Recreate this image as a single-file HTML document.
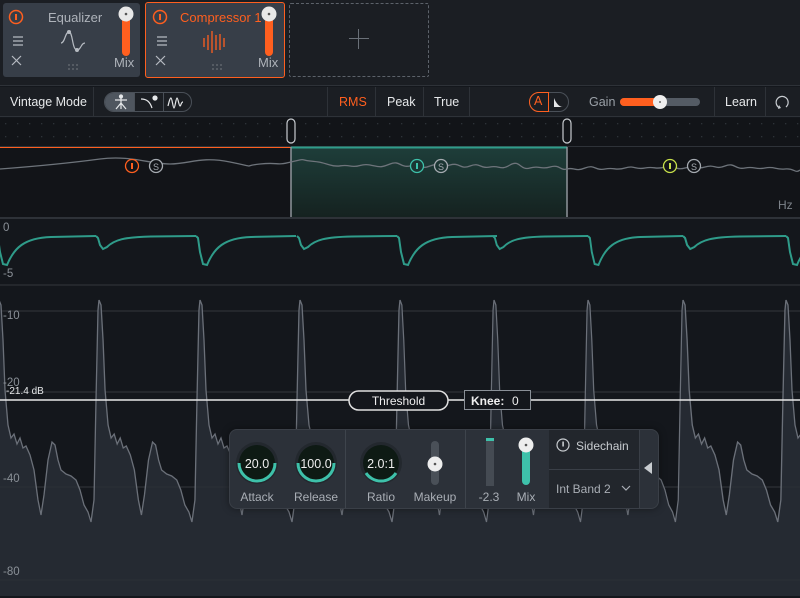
<!DOCTYPE html>
<html><head><meta charset="utf-8"><style>
*{margin:0;padding:0;box-sizing:border-box}
body{width:800px;height:596px;overflow:hidden;background:#14171c;font-family:"Liberation Sans",sans-serif;position:relative}
.a{position:absolute}
.t{position:absolute;white-space:nowrap}
</style></head><body>
<div class="a" style="left:0;top:0;width:800px;height:86px;background:#1b1e23;border-bottom:1px solid #2e3238"></div>
<div class="a" style="left:3px;top:3px;width:137px;height:74px;background:#373e48;border-radius:3px"></div>
<div class="a" style="left:145px;top:2px;width:140px;height:76px;background:#373e48;border:1.5px solid #ff5f1f;border-radius:3px"></div>
<div class="a" style="left:289px;top:3px;width:140px;height:74px;border:1px dashed #5c626a;border-radius:2px"></div>
<div class="t" style="left:349px;top:38px;width:20px;height:1px;background:#6a7078"></div>
<div class="t" style="left:358px;top:29px;width:1px;height:20px;background:#6a7078"></div>
<div class="t" style="left:48px;top:10px;font-size:13px;color:#aeb3ba">Equalizer</div>
<div class="t" style="left:180px;top:10px;font-size:13px;color:#ff5f1f">Compressor 1</div>
<div class="t" style="left:114px;top:55px;font-size:13px;color:#aeb3ba">Mix</div>
<div class="t" style="left:258px;top:55px;font-size:13px;color:#aeb3ba">Mix</div>
<svg class="a" style="left:0;top:0" width="440" height="86">
<g fill="none" stroke-width="1.5">
<circle cx="16" cy="17" r="6.5" stroke="#ff5f1f"/><line x1="16" y1="14" x2="16" y2="20" stroke="#ff5f1f" stroke-width="2"/>
<circle cx="160" cy="17" r="6.5" stroke="#ff5f1f"/><line x1="160" y1="14" x2="160" y2="20" stroke="#ff5f1f" stroke-width="2"/>
<g stroke="#b6bbc2" stroke-width="1.2">
<path d="M13 37h10M13 41h10M13 45h10M157 37h10M157 41h10M157 45h10"/>
<path d="M12 56l9 9M21 56l-9 9M156 56l9 9M165 56l-9 9"/>
<path d="M61 43c4 0 4-11 8-11s3 18 8 18c4 0 4-7 8-7"/>
</g>
<circle cx="69" cy="32" r="2" fill="#b6bbc2"/><circle cx="77" cy="50" r="2" fill="#b6bbc2"/>
<g stroke="#ff5f1f" stroke-width="1.3"><path d="M204 38v9M208 35v15M212 31v22M216 35v15M220 34v16M224 38v9"/></g>
<g fill="#555b63" stroke="none"><rect x="68" y="64" width="2" height="2"/><rect x="72" y="64" width="2" height="2"/><rect x="76" y="64" width="2" height="2"/><rect x="68" y="68" width="2" height="2"/><rect x="72" y="68" width="2" height="2"/><rect x="76" y="68" width="2" height="2"/><rect x="212" y="64" width="2" height="2"/><rect x="216" y="64" width="2" height="2"/><rect x="220" y="64" width="2" height="2"/><rect x="212" y="68" width="2" height="2"/><rect x="216" y="68" width="2" height="2"/><rect x="220" y="68" width="2" height="2"/></g>
<rect x="122" y="14" width="8" height="42" rx="4" fill="#ff5f1f" stroke="none"/><circle cx="126" cy="14" r="7.5" fill="#e8e8e8" stroke="none"/><circle cx="126" cy="14" r="1.3" fill="#555"/>
<rect x="265" y="14" width="8" height="42" rx="4" fill="#ff5f1f" stroke="none"/><circle cx="269" cy="14" r="7.5" fill="#e8e8e8" stroke="none"/><circle cx="269" cy="14" r="1.3" fill="#555"/>
</g></svg>
<div class="a" style="left:0;top:87px;width:800px;height:30px;background:#1b1e23;border-bottom:1px solid #2e3238"></div>
<div class="t" style="left:10px;top:95px;font-size:12.5px;color:#e6e8ea">Vintage Mode</div>
<div class="a" style="left:93px;top:87px;width:1px;height:30px;background:#2e3238"></div>
<div class="a" style="left:104px;top:92px;width:88px;height:20px;border:1px solid #4a5058;border-radius:10px;overflow:hidden;background:#1b1e23">
<div class="a" style="left:0;top:0;width:29px;height:20px;background:#4f565f"></div>
<div class="a" style="left:29px;top:0;width:1px;height:20px;background:#4a5058"></div>
<div class="a" style="left:58px;top:0;width:1px;height:20px;background:#4a5058"></div></div>
<svg class="a" style="left:104px;top:92px" width="88" height="20"><g fill="none" stroke="#e6e8ea" stroke-width="1.2"><path d="M17 5v12M11 8h12M17 11l-5 6M17 11l5 6"/><circle cx="17" cy="4.5" r="1.5" fill="#e6e8ea"/><path d="M37 7c6 0 9 3 11 9"/><circle cx="51" cy="6" r="2" fill="#e6e8ea"/><path d="M64 14c1-4 2-8 3-8s2 10 3 10 2-10 3-10 2 8 3 8 1-4 3-4"/></g></svg>
<div class="a" style="left:327px;top:87px;width:1px;height:30px;background:#2e3238"></div>
<div class="a" style="left:375px;top:87px;width:1px;height:30px;background:#2e3238"></div>
<div class="a" style="left:423px;top:87px;width:1px;height:30px;background:#2e3238"></div>
<div class="a" style="left:469px;top:87px;width:1px;height:30px;background:#2e3238"></div>
<div class="t" style="left:339px;top:95px;font-size:12.5px;color:#ff5f1f">RMS</div>
<div class="t" style="left:387px;top:95px;font-size:12.5px;color:#e6e8ea">Peak</div>
<div class="t" style="left:434px;top:95px;font-size:12.5px;color:#e6e8ea">True</div>
<div class="a" style="left:529px;top:92px;width:40px;height:20px;border:1px solid #4a5058;border-radius:10px"></div>
<div class="a" style="left:529px;top:92px;width:20px;height:20px;border:1px solid #ff5f1f;border-radius:10px 0 0 10px"></div>
<div class="t" style="left:534px;top:94px;font-size:12.5px;color:#ff5f1f">A</div>
<svg class="a" style="left:549px;top:92px" width="20" height="20"><path d="M5 6v9h9C10 15 7 11 5 6z" fill="#e6e8ea"/></svg>
<div class="t" style="left:589px;top:95px;font-size:12.5px;color:#9aa0a7">Gain</div>
<div class="a" style="left:620px;top:98px;width:80px;height:8px;border-radius:4px;background:#545b64"></div>
<div class="a" style="left:620px;top:98px;width:42px;height:8px;border-radius:4px;background:#ff5f1f"></div>
<div class="a" style="left:653px;top:95px;width:14px;height:14px;border-radius:7px;background:#eee"></div>
<div class="a" style="left:659px;top:101px;width:2px;height:2px;border-radius:1px;background:#666"></div>
<div class="a" style="left:714px;top:87px;width:1px;height:30px;background:#2e3238"></div>
<div class="a" style="left:765px;top:87px;width:1px;height:30px;background:#2e3238"></div>
<div class="t" style="left:725px;top:95px;font-size:12.5px;color:#e6e8ea">Learn</div>
<svg class="a" style="left:772px;top:92px" width="20" height="20"><path d="M8 16A6 6 0 1 1 14 15" fill="none" stroke="#c8ccd0" stroke-width="1.2"/><path d="M7 13l2 3-3 1z" fill="#c8ccd0"/></svg>
<svg class="a" style="left:0;top:118px" width="800" height="480">
<defs>
<pattern id="dp" width="12" height="13" patternUnits="userSpaceOnUse"><rect x="5" y="5" width="1.3" height="1.3" fill="#2e3238"/></pattern>
<linearGradient id="tg" x1="0" y1="0" x2="0" y2="1"><stop offset="0" stop-color="#1e3e3a"/><stop offset="1" stop-color="#152220"/></linearGradient>
</defs>
<rect x="0" y="0" width="800" height="28" fill="#121418"/>
<rect x="0" y="0" width="800" height="28" fill="url(#dp)"/>
<rect x="0" y="29" width="800" height="70" fill="#121418"/>
<line x1="0" y1="28.5" x2="800" y2="28.5" stroke="#2e3238"/>
<rect x="291" y="29" width="276" height="70" fill="url(#tg)"/>
<line x1="0" y1="29.5" x2="291" y2="29.5" stroke="#ff5f1f" stroke-width="1"/>
<line x1="291" y1="29.5" x2="567" y2="29.5" stroke="#2f9c8a" stroke-width="2"/>
<line x1="291" y1="29" x2="291" y2="99" stroke="#8f959b" stroke-width="1.5"/>
<line x1="567" y1="29" x2="567" y2="99" stroke="#8f959b" stroke-width="1.5"/>
<rect x="287" y="1" width="8" height="24" rx="4" fill="#121418" stroke="#c8ccd0" stroke-width="1.2"/>
<rect x="563" y="1" width="8" height="24" rx="4" fill="#121418" stroke="#c8ccd0" stroke-width="1.2"/>
<path d="M0 51C40 48 70 45 100 41 S150 46 170 46 200 38 230 44 240 48 260 46 275 48 291 44 300 42 310 43 320 44 330 47 340 46 350 48 360 45 370 47 380 50 390 46 400 50 410 48 420 52 430 48 440 50 450 47 460 52 470 48 480 51 490 49 500 53 510 47 520 53 530 50 540 52 550 49 560 53 567 51 575 54 585 50 595 53 605 51 615 53 625 50 635 52 645 50 655 52 665 49 675 53 685 50 695 52 705 49 715 52 725 48 735 52 745 50 755 52 765 50 775 52 785 51 795 56 800 52" fill="none" stroke="#6e747b" stroke-width="1.3"/>
<circle cx="132" cy="48" r="6.5" fill="#121418" stroke="#ff5f1f" stroke-width="1.3"/><rect x="131" y="45" width="2" height="6" fill="#ff5f1f"/>
<circle cx="156" cy="48" r="6.5" fill="#121418" stroke="#a6abb1" stroke-width="1.3"/><text x="156" y="52" font-size="9" fill="#a6abb1" text-anchor="middle" font-family="Liberation Sans">S</text>
<circle cx="417" cy="48" r="6.5" fill="#1b3532" stroke="#3ec1aa" stroke-width="1.3"/><rect x="416" y="45" width="2" height="6" fill="#3ec1aa"/>
<circle cx="441" cy="48" r="6.5" fill="#1b3532" stroke="#a6abb1" stroke-width="1.3"/><text x="441" y="52" font-size="9" fill="#a6abb1" text-anchor="middle" font-family="Liberation Sans">S</text>
<circle cx="670" cy="48" r="6.5" fill="#121418" stroke="#c7e04a" stroke-width="1.3"/><rect x="669" y="45" width="2" height="6" fill="#c7e04a"/>
<circle cx="694" cy="48" r="6.5" fill="#121418" stroke="#a6abb1" stroke-width="1.3"/><text x="694" y="52" font-size="9" fill="#a6abb1" text-anchor="middle" font-family="Liberation Sans">S</text>
<text x="778" y="91" font-size="12" fill="#7d838a" font-family="Liberation Sans">Hz</text>
<line x1="0" y1="99.5" x2="800" y2="99.5" stroke="#2e3238"/>
</svg>
<svg class="a" style="left:0;top:0" width="800" height="596">
<defs>
<path id="wl" d="M0,300 L2,305 L4,340 L6,390 L9,425 L12,438 L15,434 L18,444 L21,438 L24,448 L27,446 L31,455 L35,470 L39,500 L42,515 L45,495 L49,460 L53,442 L56,445 L59,460 L62,470 L67,474 L72,476 L77,480 L81,490 L85,505 L89,512 L92,522 L95,500 L97,400 L99,310 L100,300"/>
<path id="wf" d="M0,300 L2,305 L4,340 L6,390 L9,425 L12,438 L15,434 L18,444 L21,438 L24,448 L27,446 L31,455 L35,470 L39,500 L42,515 L45,495 L49,460 L53,442 L56,445 L59,460 L62,470 L67,474 L72,476 L77,480 L81,490 L85,505 L89,512 L92,522 L95,500 L97,400 L99,310 L100.6,300 L100.6,596 L0,596 Z"/>
<path id="gd" d="M0,236 L2,238 L4,252 L7,264 L11,265 C18,248 28,238 55,237 L100,236"/>
<path id="gs" d="M0,236 L2,238 L4,245 L7,249 L11,247 C18,240 28,237 55,236.5 L100,236"/>
</defs>
<rect x="0" y="218" width="800" height="378" fill="#14171c"/>
<g stroke="#2d3137" stroke-width="1.2"><line x1="0" y1="285" x2="800" y2="285"/><line x1="0" y1="311" x2="800" y2="311"/><line x1="0" y1="392" x2="800" y2="392"/><line x1="0" y1="487" x2="800" y2="487"/><line x1="0" y1="580" x2="800" y2="580"/></g>
<g id="wv">
<use href="#WAVE" transform="translate(-1,0)"/>
<use href="#WAVE" transform="translate(99,0) scale(1.01,1)"/>
<use href="#WAVE" transform="translate(200,0)"/>
<use href="#WAVE" transform="translate(300,0)"/>
<use href="#WAVE" transform="translate(400,0) scale(0.94,1)"/>
<use href="#WAVE" transform="translate(494,0) scale(0.94,1)"/>
<use href="#WAVE" transform="translate(588,0) scale(0.95,1)"/>
<use href="#WAVE" transform="translate(683,0) scale(1.03,1)"/>
<use href="#WAVE" transform="translate(786,0)"/>
</g>
<g fill="#252a32" stroke="none">
<use href="#wf" transform="translate(-1,0)"/>
<use href="#wf" transform="translate(99,0) scale(1.01,1)"/>
<use href="#wf" transform="translate(200,0)"/>
<use href="#wf" transform="translate(300,0)"/>
<use href="#wf" transform="translate(400,0) scale(0.94,1)"/>
<use href="#wf" transform="translate(494,0) scale(0.94,1)"/>
<use href="#wf" transform="translate(588,0) scale(0.95,1)"/>
<use href="#wf" transform="translate(683,0) scale(1.03,1)"/>
<use href="#wf" transform="translate(786,0)"/>
</g>
<g stroke="#2d3137" stroke-width="1" opacity="0.9"><line x1="0" y1="487" x2="800" y2="487"/><line x1="0" y1="580" x2="800" y2="580"/></g>
<g fill="none" stroke="#6b7079" stroke-width="1.3">
<use href="#wl" transform="translate(-1,0)"/>
<use href="#wl" transform="translate(99,0) scale(1.01,1)"/>
<use href="#wl" transform="translate(200,0)"/>
<use href="#wl" transform="translate(300,0)"/>
<use href="#wl" transform="translate(400,0) scale(0.94,1)"/>
<use href="#wl" transform="translate(494,0) scale(0.94,1)"/>
<use href="#wl" transform="translate(588,0) scale(0.95,1)"/>
<use href="#wl" transform="translate(683,0) scale(1.03,1)"/>
<use href="#wl" transform="translate(786,0)"/>
</g>
<g fill="none" stroke="#2f9c8a" stroke-width="2">
<use href="#gd" transform="translate(-4,0)"/>
<use href="#gs" transform="translate(96,0)"/>
<use href="#gd" transform="translate(196,0)"/>
<use href="#gs" transform="translate(297,0)"/>
<use href="#gd" transform="translate(397,0)"/>
<use href="#gs" transform="translate(493,0) scale(0.95,1)"/>
<use href="#gd" transform="translate(588,0) scale(0.95,1)"/>
<use href="#gs" transform="translate(683,0) scale(1.03,1)"/>
<use href="#gd" transform="translate(786,0)"/>
</g>
<line x1="0" y1="218.5" x2="800" y2="218.5" stroke="#2e3238"/>
<g font-family="Liberation Sans" font-size="11.5" fill="#8a9097">
<text x="3" y="231">0</text><text x="3" y="277">-5</text><text x="3" y="319">-10</text><text x="3" y="386">-20</text><text x="3" y="482">-40</text><text x="3" y="575">-80</text></g>
<text x="6" y="394" font-family="Liberation Sans" font-size="10" fill="#e6e8ea">-21.4 dB</text>
<line x1="0" y1="400" x2="800" y2="400" stroke="#e8e8e8" stroke-width="1.5"/>
<rect x="349" y="391" width="99" height="19" rx="9.5" fill="#14171c" stroke="#e0e0e0" stroke-width="1.5"/>
<text x="398.5" y="405" font-family="Liberation Sans" font-size="12" fill="#eee" text-anchor="middle">Threshold</text>
<rect x="464.5" y="390.5" width="66" height="19" fill="#14171c" stroke="#8a9097"/>
<text x="471" y="405" font-family="Liberation Sans" font-size="12" fill="#eee" font-weight="bold">Knee:</text>
<text x="512" y="405" font-family="Liberation Sans" font-size="12" fill="#eee">0</text>
</svg>
<div class="a" style="left:229px;top:429px;width:430px;height:80px;background:#2c3139;border:1px solid #3a3f47;border-radius:8px;overflow:hidden;box-shadow:0 0 8px rgba(0,0,0,.4)">
<div class="a" style="left:319px;top:0;width:90px;height:80px;background:#22262c"></div>
<div class="a" style="left:409px;top:0;width:1px;height:80px;background:#3a3f47"></div>
<div class="a" style="left:319px;top:39px;width:90px;height:1px;background:#3a3f47"></div>
<div class="a" style="left:115px;top:0;width:1px;height:80px;background:#3e444c"></div>
<div class="a" style="left:235px;top:0;width:1px;height:80px;background:#3e444c"></div>
</div>
<svg class="a" style="left:229px;top:429px" width="430" height="80">
<g font-family="Liberation Sans">
<circle cx="28" cy="34" r="21" fill="#23282e"/><circle cx="28" cy="34" r="18" fill="#0e1a14"/>
<path d="M10 34A18 18 0 0 0 46 34" fill="none" stroke="#3ec1aa" stroke-width="3"/>
<text x="28" y="39" font-size="12.5" fill="#eee" text-anchor="middle">20.0</text>
<circle cx="87" cy="34" r="21" fill="#23282e"/><circle cx="87" cy="34" r="18" fill="#0e1a14"/>
<path d="M69 34A18 18 0 0 0 105 34" fill="none" stroke="#3ec1aa" stroke-width="3"/>
<text x="87" y="39" font-size="12.5" fill="#eee" text-anchor="middle">100.0</text>
<circle cx="152" cy="34" r="21" fill="#23282e"/><circle cx="152" cy="34" r="18" fill="#0e1a14"/>
<path d="M137 44A18 18 0 0 0 167 44" fill="none" stroke="#3ec1aa" stroke-width="3"/>
<text x="152" y="39" font-size="12.5" fill="#eee" text-anchor="middle">2.0:1</text>
<rect x="202" y="12" width="8" height="44" rx="4" fill="#4a5058"/>
<circle cx="206" cy="35" r="7.5" fill="#eee"/><circle cx="206" cy="35" r="1.3" fill="#555"/>
<rect x="257" y="9" width="8" height="48" fill="#454b53"/><rect x="257" y="9" width="8" height="3" fill="#3ec1aa"/>
<rect x="293" y="16" width="8" height="40" rx="4" fill="#3ec1aa"/>
<circle cx="297" cy="16" r="7.5" fill="#eee"/><circle cx="297" cy="16" r="1.3" fill="#555"/>
<g font-size="12" fill="#a9aeb5" text-anchor="middle">
<text x="28" y="72">Attack</text><text x="87" y="72">Release</text><text x="152" y="72">Ratio</text><text x="206" y="72">Makeup</text><text x="260" y="72">-2.3</text><text x="297" y="72">Mix</text></g>
<circle cx="334" cy="16" r="6" fill="none" stroke="#c8ccd0" stroke-width="1.2"/><rect x="333.3" y="12.5" width="1.6" height="5" fill="#c8ccd0"/>
<text x="347" y="21" font-size="12" fill="#c8ccd0">Sidechain</text>
<text x="327" y="64" font-size="12" fill="#a9aeb5">Int Band 2</text>
<path d="M393 57l4 4 4-4" fill="none" stroke="#a9aeb5" stroke-width="1.2"/>
<path d="M415 39l8-6v12z" fill="#c8ccd0"/>
</g></svg>
</body></html>
